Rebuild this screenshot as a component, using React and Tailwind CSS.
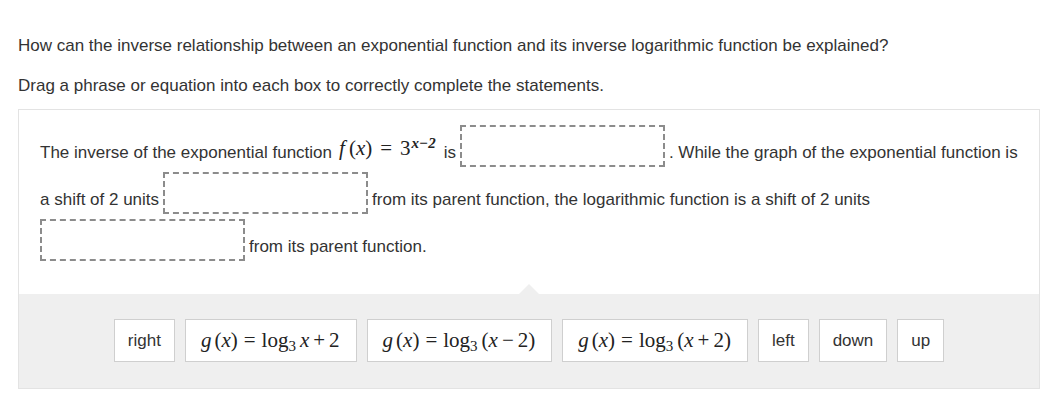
import React from "react";

const serif = "font-['Liberation_Serif','Times_New_Roman',serif]";

function FofX() {
  return (
    <span className={`${serif} text-[21px] whitespace-nowrap ml-[7px] mr-[8px] text-[#222]`}>
      <i>f</i>
      <span className="ml-[4px]">(</span>
      <i>x</i>)
      <span className="mx-[8px]">=</span>3
      <sup className="text-[15px] italic font-semibold ml-[1px]">x−2</sup>
    </span>
  );
}

function GofX({ arg }) {
  return (
    <span className={`${serif} text-[21px] whitespace-nowrap text-[#222]`}>
      <i>g</i>
      <span className="ml-[3px]">(</span>
      <i>x</i>)
      <span className="mx-[6px]">=</span>
      log<sub className="text-[15px]">3</sub>
      {arg === "plain" ? (
        <>
          <i className="ml-[4px]">x</i>
          <span className="mx-[4px]">+</span>2
        </>
      ) : (
        <>
          <span className="ml-[4px]">(</span>
          <i>x</i>
          <span className="mx-[4px]">{arg === "minus" ? "−" : "+"}</span>2)
        </>
      )}
    </span>
  );
}

function Drop() {
  return (
    <span className="inline-block w-[205px] h-[42px] border-2 border-dashed border-[#8c8c8c] mx-[4px] shrink-0" />
  );
}

function T({ children }) {
  return <span className="pt-[13px] leading-[22px] whitespace-nowrap">{children}</span>;
}

function Chip({ children, math }) {
  return (
    <div
      className={`h-[43px] flex items-center bg-white border border-[#cfcfcf] ${
        math ? "px-[15px] pr-[16px]" : "px-[13px]"
      }`}
    >
      {children}
    </div>
  );
}

export default function App() {
  return (
    <div className="w-[1050px] h-[400px] bg-white px-[18px] pt-[35px] font-['Liberation_Sans',Arial,sans-serif] text-[17px] text-[#333]">
      <p className="leading-[22px]">
        How can the inverse relationship between an exponential function and its inverse logarithmic function be explained?
      </p>
      <p className="mt-[18px] leading-[22px]">
        Drag a phrase or equation into each box to correctly complete the statements.
      </p>
      <div className="mt-[12px] w-[1022px] border border-[#e3e3e3]">
        <div className="px-[21px] pt-[15px] pb-[33px] flex flex-col gap-[5px]">
          <div className="flex items-center">
            <T>The inverse of the exponential function</T>
            <span className="pt-[6px]">
              <FofX />
            </span>
            <T>is</T>
            <Drop />
            <T>. While the graph of the exponential function is</T>
          </div>
          <div className="flex items-center">
            <T>a shift of 2 units</T>
            <Drop />
            <T>from its parent function, the logarithmic function is a shift of 2 units</T>
          </div>
          <div className="flex items-center -ml-[4px]">
            <Drop />
            <T>from its parent function.</T>
          </div>
        </div>
        <div className="relative bg-[#efefef] pt-[25px] pb-[26px] flex justify-center gap-[10px]">
          <span className="absolute left-1/2 -translate-x-1/2 -top-[10px] w-0 h-0 border-x-[10px] border-x-transparent border-b-[10px] border-b-[#efefef]" />
          <Chip>right</Chip>
          <Chip math>
            <GofX arg="plain" />
          </Chip>
          <Chip math>
            <GofX arg="minus" />
          </Chip>
          <Chip math>
            <GofX arg="plus" />
          </Chip>
          <Chip>left</Chip>
          <Chip>down</Chip>
          <Chip>up</Chip>
        </div>
      </div>
    </div>
  );
}
